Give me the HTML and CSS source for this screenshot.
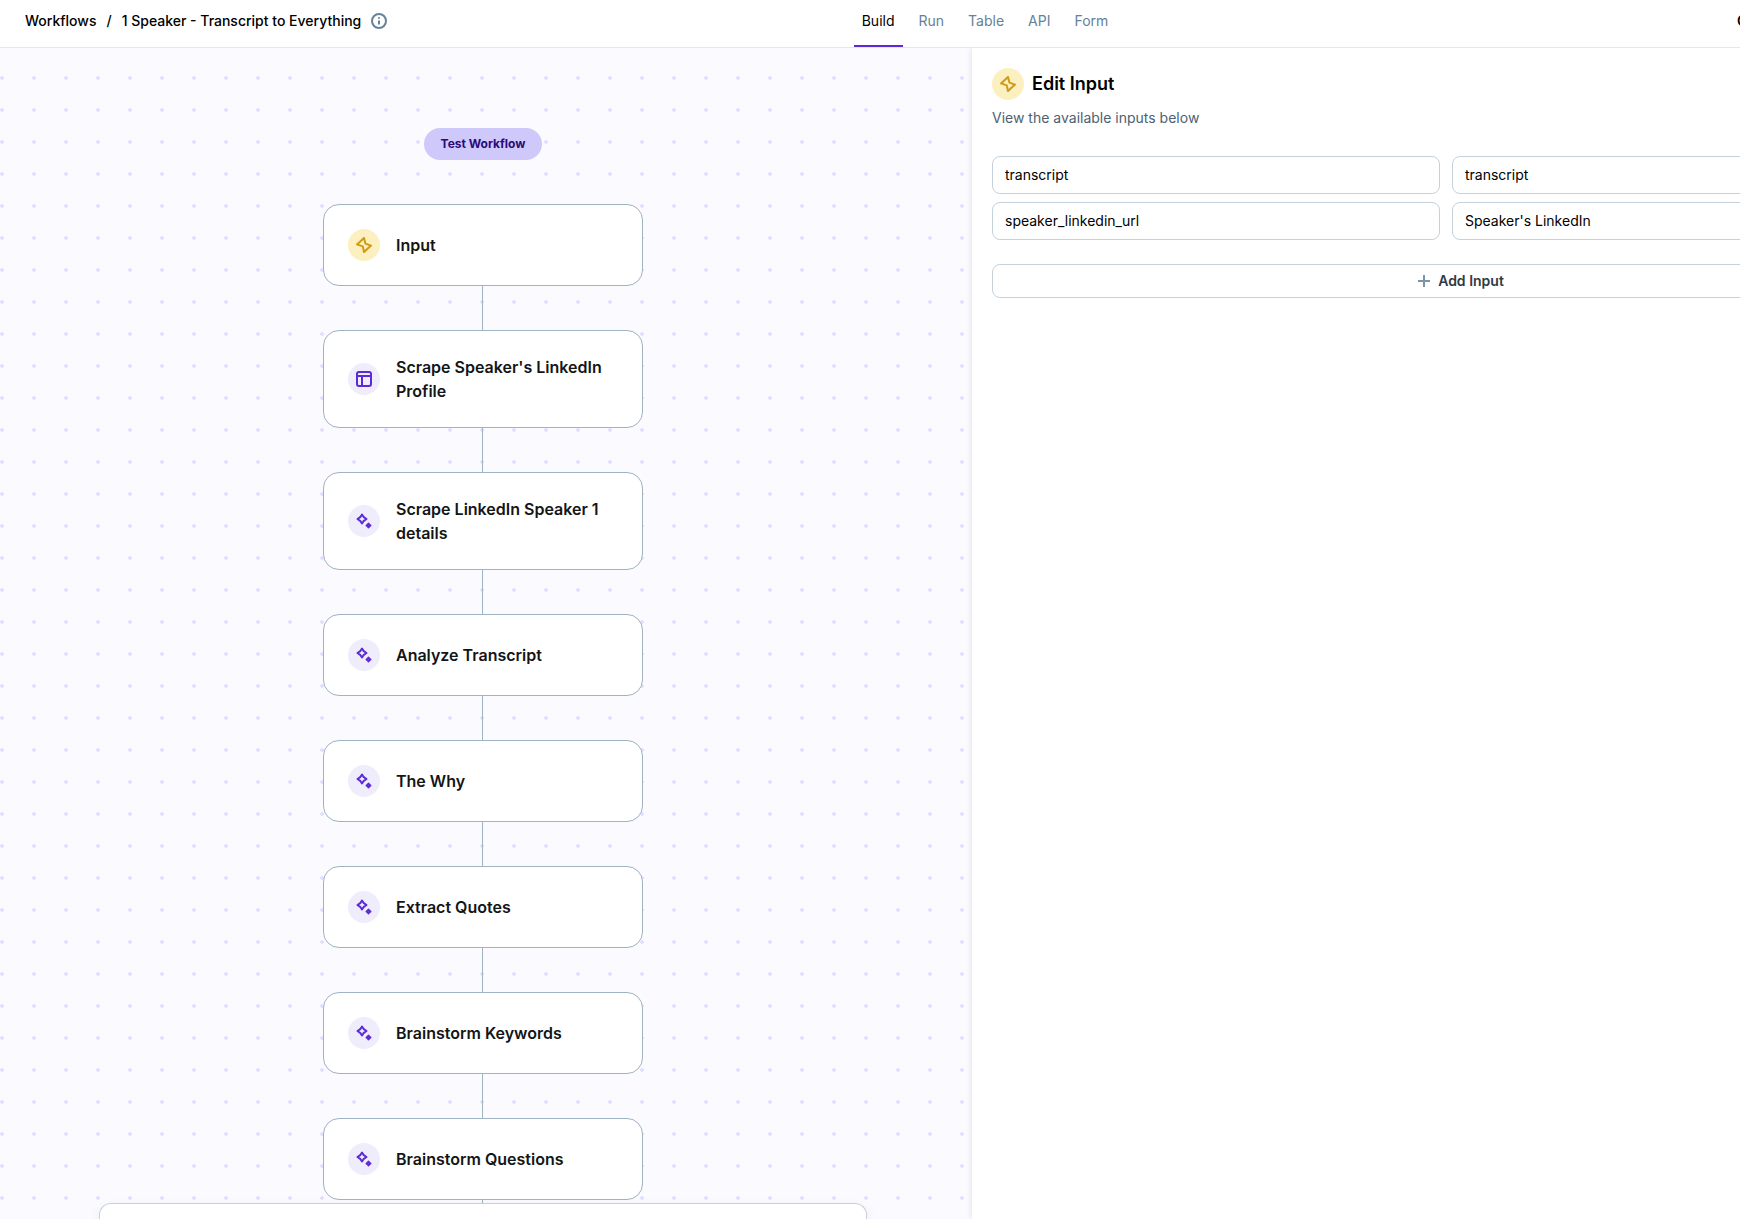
FILE: index.html
```html
<!DOCTYPE html>
<html lang="en">
<head>
    <meta charset="UTF-8">
    <meta name="viewport" content="width=device-width, initial-scale=1.0">
    <title>1 Speaker - Transcript to Everything</title>
    <link rel="stylesheet" href="styles.css">
</head>
<body>
    <svg class="sprite" aria-hidden="true">
        <symbol id="icon-bolt" viewBox="0 0 16 16">
            <path d="M8 1 9.400 6.600 15 8.600 8 15 6.800 9.400 1 7.400z"/>
        </symbol>
        <symbol id="icon-layout" viewBox="0 0 16 16">
            <rect x="1" y="1" width="14" height="14" rx="2"/>
            <path d="M1 5h14M6 5v10"/>
        </symbol>
        <symbol id="icon-sparkles" viewBox="0 0 16 16">
            <path d="M6 1.500 7.800 4.200 10.500 6 7.800 7.800 6 10.500 4.200 7.800 1.500 6 4.200 4.200z"/>
            <path d="M12.500 10.500 13.300 11.700 14.500 12.500 13.300 13.300 12.500 14.500 11.700 13.300 10.500 12.500 11.700 11.700z"/>
        </symbol>
    </svg>

    <div class="app">
        <header class="header">
            <nav class="breadcrumbs">
                <a href="#">Workflows</a>
                <span>/</span>
                <span>1 Speaker - Transcript to Everything</span>
                <button type="button" class="info" aria-label="Workflow info">
                    <svg viewBox="0 0 16 16"><circle cx="8" cy="8" r="7"/><path d="M8 7.500v4M8 4.300v1.500"/></svg>
                </button>
            </nav>
            <nav class="tabs">
                <a href="#" class="active">Build</a>
                <a href="#">Run</a>
                <a href="#">Table</a>
                <a href="#">API</a>
                <a href="#">Form</a>
            </nav>
            <div class="actions">
                <button type="button">Changes</button>
            </div>
        </header>

        <main class="workspace">
            <section class="canvas">
                <button type="button" class="test-button">Test Workflow</button>
                <ol class="flow">
                    <li class="node">
                        <span class="icon yellow"><svg><use href="#icon-bolt"/></svg></span>
                        <h3>Input</h3>
                    </li>
                    <li class="node">
                        <span class="icon"><svg><use href="#icon-layout"/></svg></span>
                        <h3>Scrape Speaker's LinkedIn Profile</h3>
                    </li>
                    <li class="node">
                        <span class="icon"><svg><use href="#icon-sparkles"/></svg></span>
                        <h3>Scrape LinkedIn Speaker 1 details</h3>
                    </li>
                    <li class="node">
                        <span class="icon"><svg><use href="#icon-sparkles"/></svg></span>
                        <h3>Analyze Transcript</h3>
                    </li>
                    <li class="node">
                        <span class="icon"><svg><use href="#icon-sparkles"/></svg></span>
                        <h3>The Why</h3>
                    </li>
                    <li class="node">
                        <span class="icon"><svg><use href="#icon-sparkles"/></svg></span>
                        <h3>Extract Quotes</h3>
                    </li>
                    <li class="node">
                        <span class="icon"><svg><use href="#icon-sparkles"/></svg></span>
                        <h3>Brainstorm Keywords</h3>
                    </li>
                    <li class="node">
                        <span class="icon"><svg><use href="#icon-sparkles"/></svg></span>
                        <h3>Brainstorm Questions</h3>
                    </li>
                </ol>
                <div class="drawer"></div>
            </section>

            <section class="panel">
                <div class="panel-title">
                    <span class="icon yellow"><svg><use href="#icon-bolt"/></svg></span>
                    <h2>Edit Input</h2>
                </div>
                <p>View the available inputs below</p>
                <form class="inputs">
                    <div class="input-row">
                        <input type="text" value="transcript" aria-label="Variable name">
                        <input type="text" value="transcript" aria-label="Display name">
                    </div>
                    <div class="input-row">
                        <input type="text" value="speaker_linkedin_url" aria-label="Variable name">
                        <input type="text" value="Speaker's LinkedIn" aria-label="Display name">
                    </div>
                    <button type="button" class="add-button">
                        <svg viewBox="0 0 12 12"><path d="M6 0v12M0 6h12"/></svg>
                        Add Input
                    </button>
                </form>
            </section>
        </main>
    </div>
</body>
</html>
```
FILE: styles.css
```css
* {
    box-sizing: border-box;
}

body {
    margin: 0;
    height: 100vh;
    overflow: hidden;
    font-family: Inter, "Liberation Sans", sans-serif;
    font-size: 14px;
    line-height: 20px;
    color: #000000;
    background: #ffffff;
}

h2,
h3,
p,
ol {
    margin: 0;
    padding: 0;
}

a {
    color: inherit;
    text-decoration: none;
}

button,
input {
    font: inherit;
    color: inherit;
    background: none;
    border: none;
    padding: 0;
}

button {
    cursor: pointer;
}

svg {
    fill: none;
    stroke: currentColor;
}

.sprite {
    display: none;
}

/* the app is wider than the window and runs off both sides */
.app {
    display: flex;
    flex-direction: column;
    width: calc(100% + 216px);
    height: 100%;
    margin-left: -6px;
}

/* header */
.header {
    display: grid;
    grid-template-columns: 1fr auto 1fr;
    height: 48px;
    flex-shrink: 0;
    padding: 0 5px 0 31px;
    border-bottom: 1px solid #e2e8ec;
}

.breadcrumbs {
    display: flex;
    align-items: center;
    gap: 10px;
    padding-bottom: 5px;
    font-weight: 500;
}

.info {
    display: flex;
    color: #64829a;
}

.info svg {
    width: 16px;
    height: 16px;
    stroke-width: 2;
}

.tabs {
    display: flex;
    gap: 8px;
    color: #64829a;
}

.tabs a {
    padding: 11px 8px 14px;
}

.tabs .active {
    color: #000000;
    border-bottom: 2px solid #5a2bd6;
}

.actions {
    display: flex;
    align-items: center;
    justify-self: end;
    width: 208px;
    padding-bottom: 5px;
    font-weight: 600;
}

/* layout */
.workspace {
    display: grid;
    grid-template-columns: 1fr 1fr;
    flex: 1;
    min-height: 0;
}

.canvas {
    position: relative;
    display: flex;
    flex-direction: column;
    align-items: center;
    padding-top: 80px;
    overflow: hidden;
    background: #fbfaff radial-gradient(circle, #e3dfff 2px, transparent 2px) -8px 14px / 32px 32px;
}

.test-button {
    flex-shrink: 0;
    height: 32px;
    margin-bottom: 44px;
    padding: 0 17px;
    border-radius: 16px;
    font-size: 12px;
    font-weight: 700;
    color: #2a0a78;
    background: #cfc8fb;
}

/* workflow steps */
.flow {
    display: flex;
    flex-direction: column;
    gap: 44px;
    width: 320px;
    list-style: none;
}

.node {
    position: relative;
    display: flex;
    align-items: center;
    gap: 16px;
    padding: 24px;
    border: 1px solid #9fb3c2;
    border-radius: 16px;
    background: #ffffff;
}

.node::after {
    content: "";
    position: absolute;
    top: calc(100% + 1px);
    left: 50%;
    width: 1px;
    height: 44px;
    margin-left: -1px;
    background: #9fb3c2;
}

.node h3 {
    font-size: 16px;
    font-weight: 600;
    line-height: 24px;
    color: #131517;
}

.icon {
    display: flex;
    align-items: center;
    justify-content: center;
    flex-shrink: 0;
    width: 32px;
    height: 32px;
    border-radius: 50%;
    color: #5a2bd6;
    background: #efedfb;
}

.icon svg {
    width: 16px;
    height: 16px;
    stroke-width: 2;
    stroke-linejoin: round;
}

.icon.yellow {
    color: #cf9a14;
    background: #fcefc0;
}

.drawer {
    position: absolute;
    bottom: 0;
    width: 768px;
    height: 16px;
    border: 1px solid #c5d1db;
    border-bottom: none;
    border-radius: 12px 12px 0 0;
    background: #ffffff;
    box-shadow: 0 4px 12px rgba(30, 40, 80, 0.08);
}

/* edit panel */
.panel {
    position: relative;
    padding: 20px;
    background: #ffffff;
    box-shadow: 0 0 6px rgba(30, 40, 60, 0.14);
    clip-path: inset(0 0 0 -8px);
}

.panel-title {
    display: flex;
    align-items: center;
    gap: 8px;
}

.panel-title h2 {
    font-size: 18px;
    font-weight: 600;
    line-height: 28px;
}

.panel p {
    margin-top: 8px;
    color: #4d6172;
}

.inputs {
    display: flex;
    flex-direction: column;
    gap: 8px;
    margin-top: 28px;
}

.input-row {
    display: grid;
    grid-template-columns: 1fr 1fr;
    gap: 12px;
    padding-right: 30px;
}

.input-row input {
    min-width: 0;
    height: 38px;
    padding: 0 12px 2px;
    border: 1px solid #c5d1db;
    border-radius: 8px;
}

.add-button {
    display: flex;
    align-items: center;
    justify-content: center;
    gap: 8px;
    height: 34px;
    margin-top: 16px;
    border: 1px solid #c5d1db;
    border-radius: 8px;
    font-weight: 600;
    color: #2f3a42;
}

.add-button svg {
    width: 12px;
    height: 12px;
    color: #7d93a6;
    stroke-width: 2;
}
```
